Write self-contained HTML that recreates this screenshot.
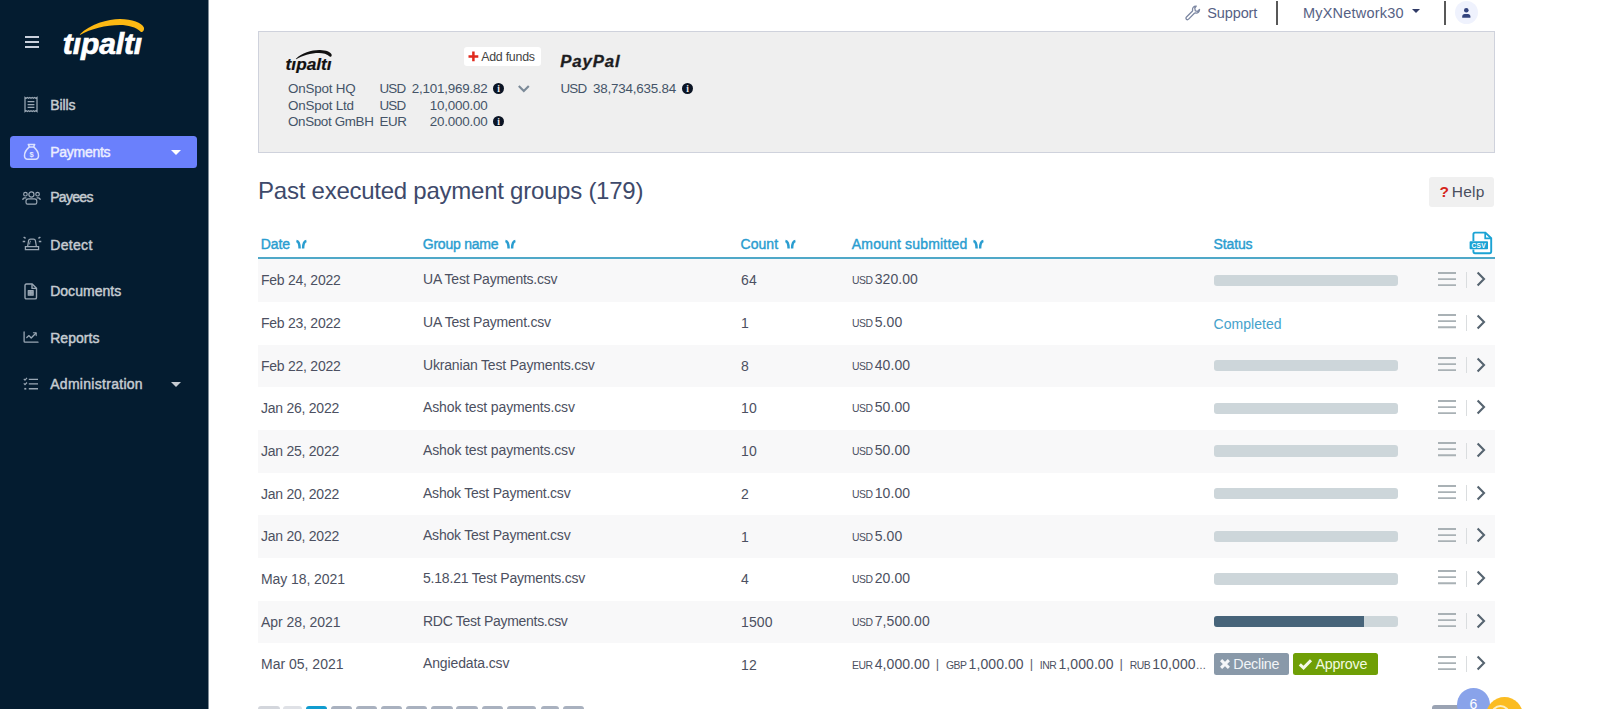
<!DOCTYPE html>
<html lang="en"><head><meta charset="utf-8"><title>Past executed payment groups</title>
<style>
*{box-sizing:border-box;margin:0;padding:0}
html,body{width:1600px;height:709px;overflow:hidden;background:#fff}
body{font-family:"Liberation Sans",sans-serif;color:#4c5061;position:relative}
.abs{position:absolute;white-space:nowrap}
/* sidebar */
.side{position:absolute;left:0;top:0;width:208px;height:709px;background:#041c30;box-shadow:1px 0 0 rgba(4,28,48,.5)}
.side .hamb{position:absolute;left:24.5px;top:36.2px;width:14px;height:12px}
.side .hamb i{position:absolute;left:0;width:14px;height:1.8px;background:#c9d0dc}
.logo{position:absolute;left:62.8px;top:23.8px;white-space:nowrap;font-weight:700;font-style:italic;font-size:30px;line-height:40px;color:#fff;letter-spacing:-0.1px;-webkit-text-stroke:0.7px #fff}
.nav{position:absolute;left:10px;width:187px;height:32px;border-radius:3.5px;color:#c6ccd2;font-size:14px;line-height:32px;white-space:nowrap}
.nav.act{background:#6a80fc;color:#eceeff}
.nav svg.ic{position:absolute}
.nav span{position:absolute;left:40.2px;top:0;-webkit-text-stroke:0.45px currentColor;letter-spacing:-0.3px}
.nav .car{position:absolute;left:161.2px;top:13.8px;width:0;height:0;border-left:5px solid transparent;border-right:5px solid transparent;border-top:5.6px solid currentColor}
.nav.act .car{color:#fff}
/* top */
.topt{position:absolute;top:4.6px;font-size:14.5px;line-height:17px;color:#566184;white-space:nowrap}
.vdiv{position:absolute;top:1px;width:1.7px;height:23.8px;background:#585858}
.ucirc{position:absolute;left:1454.6px;top:1px;width:23px;height:23px;border-radius:50%;background:#eff2fd}
.panel{position:absolute;left:257.5px;top:30.6px;width:1237.5px;height:122.4px;background:#efefef;border:1px solid #cfd2dc}
.pl{position:absolute;font-size:13.4px;line-height:16.5px;color:#445468;white-space:nowrap;letter-spacing:-0.2px}
.clip{position:absolute;overflow:hidden}
.info{position:absolute;width:11px;height:11px;border-radius:50%;background:#0b1424}
.infoi{position:absolute;width:11px;height:11px;text-align:center;font-family:"Liberation Serif",serif;font-weight:700;font-size:9.6px;line-height:11.4px;color:#efefef}
.addf{position:absolute;left:464px;top:47px;width:76.5px;height:19.4px;background:#fff;border-radius:3px;font-size:12.4px;line-height:19.4px;color:#444;white-space:nowrap}
.h1{position:absolute;left:258.1px;top:176.2px;font-size:24px;line-height:30px;color:#3e4a6b;white-space:nowrap;letter-spacing:-0.25px}
.help{position:absolute;left:1429.3px;top:177px;width:65px;height:30px;border-radius:3px;background:#f0f0f0}
.th{position:absolute;top:236px;font-size:14px;line-height:16px;color:#2a9dd0;white-space:nowrap;-webkit-text-stroke:0.4px #2a9dd0}
.hline{position:absolute;left:257.7px;top:257.1px;width:1237px;height:1.9px;background:#4fa8c8}
/* table */
.row{position:absolute;left:258px;width:1236.8px;height:42.67px;font-size:14px;white-space:nowrap}
.row.odd{background:#f8f8f9}
.row>span,.row>svg{position:absolute}
.c-date{left:3px;top:13px;line-height:17px;letter-spacing:-0.25px}
.c-grp{left:165px;top:11.9px;line-height:17px;letter-spacing:-0.25px}
.c-cnt{left:483px;top:13.2px;line-height:17px;letter-spacing:0.1px}
.c-amt{left:594px;top:12.2px;line-height:17px}
.cur{font-size:10.4px;letter-spacing:-0.45px;margin-right:2.1px}
.amt{letter-spacing:0.08px}
.amt u{text-decoration:none;font-size:10.4px;letter-spacing:0}
.sep{margin:0 6.7px 0 6px;position:relative;top:-0.6px;font-size:13px;color:#5d6170}
.c-st{left:955.6px;top:13.8px;line-height:17px;color:#45a2cb;letter-spacing:0.04px}
.bar{left:955.8px;top:15.5px;width:184.4px;height:11.2px;border-radius:3px;background:#cdd6da;overflow:hidden}
.bar i{position:absolute;left:0;top:0;height:100%;width:150.6px;background:#47647a}
.ham{left:1180.2px;top:12.4px}
.vsep{left:1208px;top:12.6px;width:1px;height:16px;background:#dadddf}
.chev{left:1217.5px;top:12px}
.btn{top:9.5px;height:21.8px;border-radius:2.5px;color:#f1f4f7;font-size:14.3px;line-height:21.8px}
.btn b{font-weight:400;position:absolute;top:1.5px;letter-spacing:-0.4px}
.btn svg{position:absolute}
.decline{left:956px;width:74.8px;background:#8999a9}
.decline svg{left:4.6px;top:5.4px}.decline b{left:19.3px;letter-spacing:-0.24px}
.approve{left:1035.1px;width:84.9px;background:#6f9f06;color:#f3fbe0}
.approve svg{left:4.8px;top:5.2px}.approve b{left:22.3px;letter-spacing:-0.19px}
/* bottom */
.pg{position:absolute;top:705.6px;height:10px;border-radius:3px;background:#a9b1bf}

</style></head><body>
<div class="side">
<div class="hamb"><i style="top:0"></i><i style="top:5px"></i><i style="top:10px"></i></div>
<svg class="abs" style="left:76px;top:16px" width="72" height="22" viewBox="0 0 72 22"><path d="M3.7 18.5 C14 8 32 3 44 3 C56 3 66 7 67.9 11.5 C68.5 14 67 16.2 65 16 C60 11 52 9 44 9 C30 9 14 13 4.5 18.8 Z" fill="#fdb913"/></svg>
<div class="logo">tıpaltı</div>
<div class="nav" style="top:89px"><svg class="ic" style="left:13px;top:7.4px" width="16" height="17" viewBox="0 0 16 17" fill="none" stroke="#9aa7b4" stroke-width="1.25"><path d="M2 1.4 L3.2 2.2 L4.4 1.4 L5.6 2.2 L6.8 1.4 L8 2.2 L9.2 1.4 L10.4 2.2 L11.6 1.4 L12.8 2.2 L14 1.4 V15.6 L12.8 14.8 L11.6 15.6 L10.4 14.8 L9.2 15.6 L8 14.8 L6.8 15.6 L5.6 14.8 L4.4 15.6 L3.2 14.8 L2 15.6 Z"/><path d="M4.6 5.6 H11.4 M4.6 8.5 H11.4 M4.6 11.4 H11.4"/></svg><span style="letter-spacing:-0.1px">Bills</span></div>
<div class="nav act" style="top:135.8px"><svg class="ic" style="left:12.6px;top:7.4px" width="17" height="18" viewBox="0 0 17 18" fill="none" stroke="#dbe1ff" stroke-width="1.5" stroke-linejoin="round"><path d="M5.3 1.4 H11.7 L10.6 3.9 H6.4 Z"/><path d="M6.4 3.9 C3.6 6.2 1.5 9.8 1.5 12.8 C1.5 15 2.7 16.2 4.6 16.2 H12.4 C14.3 16.2 15.5 15 15.5 12.8 C15.5 9.8 13.4 6.2 10.6 3.9"/><text x="8.5" y="13.6" font-family="Liberation Sans, sans-serif" font-size="7.6" font-weight="700" fill="#e6eaff" stroke="none" text-anchor="middle">$</text></svg><span style="top:0.5px;letter-spacing:-0.26px">Payments</span><i class="car"></i></div>
<div class="nav" style="top:181.3px"><svg class="ic" style="left:11.8px;top:9.9px" width="19" height="14.2" viewBox="0 0 20 15" fill="none" stroke="#9aa7b4" stroke-width="1.25"><circle cx="9.9" cy="3.7" r="2.7"/><circle cx="3.6" cy="3.4" r="1.9"/><circle cx="16.4" cy="3.4" r="1.9"/><path d="M6.6 8.3 H13.2 C14.8 8.3 15.6 9.4 15.6 10.7 V12.2 C15.6 13.2 15 13.9 14 13.9 H5.8 C4.8 13.9 4.2 13.2 4.2 12.2 V10.7 C4.2 9.4 5 8.3 6.6 8.3 Z"/><path d="M0.8 9.6 C0.8 8 1.7 7.2 3 7.2 H4.6 M15.4 7.2 H17 C18.3 7.2 19.2 8 19.2 9.6"/></svg><span style="letter-spacing:-0.7px">Payees</span></div>
<div class="nav" style="top:228.6px"><svg class="ic" style="left:11.5px;top:7.6px" width="20" height="15" viewBox="0 0 20 15" fill="none" stroke="#9aa7b4" stroke-width="1.25"><path d="M5.6 10.6 L6.6 4.6 C6.8 3.5 7.5 3 8.5 3 H11.5 C12.5 3 13.2 3.5 13.4 4.6 L14.4 10.6"/><path d="M3.4 10.7 H16.6 V13.6 H3.4 Z"/><path d="M9 5 C8.2 5 8 5.6 7.9 6.4 L7.6 8.4" stroke-width="0.9"/><path d="M0.7 5.6 H3.2 M16.8 5.6 H19.3 M1.6 1 L3.6 2.4 M18.4 1 L16.4 2.4" stroke-width="1.5"/></svg><span style="letter-spacing:0.33px">Detect</span></div>
<div class="nav" style="top:274.8px"><svg class="ic" style="left:14.4px;top:7.8px" width="14" height="17" viewBox="0 0 14 17" fill="none" stroke="#9aa7b4" stroke-width="1.4" stroke-linejoin="round"><path d="M2.4 1 H8.2 L12.5 5.2 V14.4 C12.5 15.3 12 15.9 11.1 15.9 H2.4 C1.5 15.9 1 15.3 1 14.4 V2.5 C1 1.6 1.5 1 2.4 1 Z"/><path d="M8 1.2 V5.4 H12.3"/><path d="M4.2 7.6 H9.2 V12.2 H4.2 Z M4.2 9.9 H9.2 M6.7 7.6 V12.2" stroke-width="1.1" fill="#7f8e9c"/></svg><span style="letter-spacing:0.02px">Documents</span></div>
<div class="nav" style="top:321.8px"><svg class="ic" style="left:13px;top:9.6px" width="16" height="13" viewBox="0 0 16 13" fill="none" stroke="#9aa7b4" stroke-width="1.3" stroke-linecap="round" stroke-linejoin="round"><path d="M1.1 0.9 V10.3 C1.1 10.9 1.4 11.2 2 11.2 H15"/><path d="M3.8 6.6 L6 4.6 L8.2 7 L12.8 2.2"/><path d="M10.4 1.8 H13.2 V4.6" stroke-width="1.1"/></svg><span style="letter-spacing:0.04px">Reports</span></div>
<div class="nav" style="top:368.3px"><svg class="ic" style="left:13.2px;top:9px" width="16" height="14" viewBox="0 0 16 14" fill="none" stroke="#9aa7b4" stroke-width="1.35"><path d="M5.8 2.3 H15 M5.8 6.9 H15 M5.8 11.7 H15"/><path d="M0.8 1.8 L2 3.1 L4 0.9 M0.8 6.4 L2 7.7 L4 5.5" stroke-width="1.2"/><path d="M1.3 10.9 H3.3 V12.6 H1.3 Z" fill="#9aa7b4" stroke="none"/></svg><span style="letter-spacing:0.29px">Administration</span><i class="car"></i></div>
</div>
<svg class="abs" style="left:1185px;top:5px" width="17" height="16" viewBox="0 0 17 16" fill="none" stroke="#7c87a2" stroke-width="1.3" stroke-linejoin="round" stroke-linecap="round"><path d="M11.2 1.1 C9 0.9 7.2 2.8 7.6 5 C7.7 5.5 7.6 5.9 7.3 6.2 L1.5 12 C0.8 12.7 0.8 13.6 1.4 14.2 C2 14.8 2.9 14.8 3.6 14.1 L9.4 8.3 C9.7 8 10.1 7.9 10.6 8 C12.8 8.4 14.7 6.6 14.5 4.4 L12.4 6.4 L10.3 5.9 L9.8 3.2 Z"/></svg>
<div class="topt" style="left:1207.2px;letter-spacing:-0.1px">Support</div>
<div class="vdiv" style="left:1276px"></div>
<div class="topt" style="left:1303px;letter-spacing:0.2px">MyXNetwork30</div>
<div class="abs" style="left:1412px;top:9.3px;width:0;height:0;border-left:4.1px solid transparent;border-right:4.1px solid transparent;border-top:4.5px solid #303b67"></div>
<div class="vdiv" style="left:1444.2px"></div>
<div class="ucirc"></div>
<svg class="abs" style="left:1461px;top:7px" width="11" height="12" viewBox="0 0 11 12"><circle cx="5.3" cy="3.3" r="2.3" fill="#33437d"/><path d="M1.2 10.8 V9.4 C1.2 7.9 2.2 7 3.6 7 H7 C8.4 7 9.4 7.9 9.4 9.4 V10.8 Z" fill="#33437d"/></svg>
<div class="panel"></div>
<svg class="abs" style="left:294px;top:48px" width="40" height="13" viewBox="0 0 40 13"><path d="M1.7 11 C8 4.6 18 1.8 26 2 C32 2.2 36.6 4 37.6 6.4 C38 7.8 37.2 8.9 36 8.8 C33 5.8 29 4.9 25 4.9 C17 4.9 8 7.6 2.2 11.2 Z" fill="#111"/></svg>
<div class="abs" style="left:285.6px;top:52px;font-size:17.3px;line-height:24px;font-weight:700;font-style:italic;color:#111;-webkit-text-stroke:0.2px #111;letter-spacing:0px">tıpaltı</div>
<div class="pl" style="left:288px;top:81.3px">OnSpot HQ</div>
<div class="pl" style="left:288px;top:97.8px">OnSpot Ltd</div>
<div class="clip" style="left:280px;top:114.3px;width:232px;height:12.2px"><div class="pl" style="left:8px;top:0;letter-spacing:-0.35px">OnSpot GmBH</div><div class="pl" style="left:99.6px;top:0;letter-spacing:-0.45px">EUR</div><div class="pl" style="right:24.4px;top:0">20,000.00</div><i class="info" style="left:213.2px;top:1.3px"></i><span class="infoi" style="left:213.2px;top:1.3px">i</span></div>
<div class="pl" style="left:379.6px;top:81.3px;letter-spacing:-0.9px">USD</div>
<div class="pl" style="left:379.6px;top:97.8px;letter-spacing:-0.9px">USD</div>
<div class="pl" style="right:1112.4px;top:81.3px">2,101,969.82</div>
<div class="pl" style="right:1112.4px;top:97.8px">10,000.00</div>
<i class="info" style="left:493.2px;top:83.1px"></i><span class="infoi" style="left:493.2px;top:83.1px">i</span>
<svg class="abs" style="left:516.5px;top:83.5px" width="14" height="10" viewBox="0 0 14 10"><path d="M1.8 1.9 L6.8 7 L11.8 1.9" fill="none" stroke="#7b8a98" stroke-width="2.1"/></svg>
<div class="addf"><svg class="abs" style="left:4.4px;top:4px" width="11" height="11" viewBox="0 0 11 11"><path d="M5.4 0.5 V10.3 M0.5 5.4 H10.3" stroke="#e0291d" stroke-width="2.5" fill="none"/></svg><span style="position:absolute;left:17.2px;top:0.9px;letter-spacing:-0.25px">Add funds</span></div>
<div class="abs" style="left:560.2px;top:50.6px;font-size:16.8px;line-height:22px;font-weight:700;font-style:italic;color:#1d1d1f;letter-spacing:0.9px;-webkit-text-stroke:0.3px #1d1d1f">PayPal</div>
<div class="pl" style="left:560.6px;top:81.3px;letter-spacing:-0.9px">USD</div>
<div class="pl" style="right:924px;top:81.3px">38,734,635.84</div>
<i class="info" style="left:682px;top:83.1px"></i><span class="infoi" style="left:682px;top:83.1px">i</span>
<div class="h1">Past executed payment groups (179)</div>
<div class="help"><span class="abs" style="left:10.2px;top:6.3px;font-size:15.5px;line-height:18px;font-weight:700;color:#d5261a">?</span><span class="abs" style="left:22.4px;top:6.4px;font-size:15.5px;line-height:18px;color:#4a4f5e;letter-spacing:0.3px">Help</span></div>
<div class="th" style="left:260.8px;letter-spacing:-0.07px">Date</div>
<svg class="abs" style="left:296.2px;top:239.2px" width="11" height="10" viewBox="0 0 11 10" fill="none" stroke="#2a9dd0" stroke-width="2.5"><path d="M0.4 2.1 C2.9 2.6 3.6 5 3.6 9.5 M10.4 2.1 C7.7 2.6 7.1 5 7.1 9.5"/></svg>
<div class="th" style="left:422.8px;letter-spacing:-0.24px">Group name</div>
<svg class="abs" style="left:504.6px;top:239.2px" width="11" height="10" viewBox="0 0 11 10" fill="none" stroke="#2a9dd0" stroke-width="2.5"><path d="M0.4 2.1 C2.9 2.6 3.6 5 3.6 9.5 M10.4 2.1 C7.7 2.6 7.1 5 7.1 9.5"/></svg>
<div class="th" style="left:740.6px;letter-spacing:0.02px">Count</div>
<svg class="abs" style="left:784.6px;top:239.2px" width="11" height="10" viewBox="0 0 11 10" fill="none" stroke="#2a9dd0" stroke-width="2.5"><path d="M0.4 2.1 C2.9 2.6 3.6 5 3.6 9.5 M10.4 2.1 C7.7 2.6 7.1 5 7.1 9.5"/></svg>
<div class="th" style="left:851.8px;letter-spacing:0.17px">Amount submitted</div>
<svg class="abs" style="left:972.8px;top:239.2px" width="11" height="10" viewBox="0 0 11 10" fill="none" stroke="#2a9dd0" stroke-width="2.5"><path d="M0.4 2.1 C2.9 2.6 3.6 5 3.6 9.5 M10.4 2.1 C7.7 2.6 7.1 5 7.1 9.5"/></svg>
<div class="th" style="left:1213.6px;letter-spacing:-0.15px">Status</div>
<svg class="abs" style="left:1469px;top:231px" width="24" height="24" viewBox="0 0 24 24"><path d="M4.4 10 V3.2 C4.4 2.2 5 1.6 6 1.6 H16.4 L22.2 7.2 V20.6 C22.2 21.6 21.6 22.2 20.6 22.2 H6 C5 22.2 4.4 21.6 4.4 20.6 V18.4" fill="none" stroke="#1ba3d4" stroke-width="1.9"/><path d="M16.2 1.8 V7.4 H22" fill="none" stroke="#1ba3d4" stroke-width="1.7"/><rect x="0.6" y="10.2" width="18.4" height="8" rx="0.8" fill="#1ba3d4"/><text x="9.8" y="16.6" font-family="Liberation Sans, sans-serif" font-weight="700" font-size="6.6" fill="#fff" text-anchor="middle" letter-spacing="0.3">CSV</text></svg>
<div class="hline"></div>
<div class="tbl">
<div class="row odd" style="top:259.30px"><span class="c-date">Feb 24, 2022</span><span class="c-grp" style="letter-spacing:-0.235px">UA Test Payments.csv</span><span class="c-cnt">64</span><span class="c-amt"><span class="cur">USD</span><span class="amt">320.00</span></span><span class="bar"></span><svg class="ham" viewBox="0 0 18.2 14.4" width="18.2" height="14.4"><path d="M0 1.05 H18.2 M0 7.1 H18.2 M0 13.2 H18.2" stroke="#a9b1b5" stroke-width="1.9" fill="none"/></svg><span class="vsep"></span><svg class="chev" viewBox="0 0 10 16" width="10" height="16"><path d="M1.6 1.6 L8 8 L1.6 14.4" stroke="#566470" stroke-width="2.1" fill="none"/></svg></div>
<div class="row" style="top:301.97px"><span class="c-date">Feb 23, 2022</span><span class="c-grp" style="letter-spacing:-0.22px">UA Test Payment.csv</span><span class="c-cnt">1</span><span class="c-amt"><span class="cur">USD</span><span class="amt">5.00</span></span><span class="c-st">Completed</span><svg class="ham" viewBox="0 0 18.2 14.4" width="18.2" height="14.4"><path d="M0 1.05 H18.2 M0 7.1 H18.2 M0 13.2 H18.2" stroke="#a9b1b5" stroke-width="1.9" fill="none"/></svg><span class="vsep"></span><svg class="chev" viewBox="0 0 10 16" width="10" height="16"><path d="M1.6 1.6 L8 8 L1.6 14.4" stroke="#566470" stroke-width="2.1" fill="none"/></svg></div>
<div class="row odd" style="top:344.64px"><span class="c-date">Feb 22, 2022</span><span class="c-grp" style="letter-spacing:-0.18px">Ukranian Test Payments.csv</span><span class="c-cnt">8</span><span class="c-amt"><span class="cur">USD</span><span class="amt">40.00</span></span><span class="bar"></span><svg class="ham" viewBox="0 0 18.2 14.4" width="18.2" height="14.4"><path d="M0 1.05 H18.2 M0 7.1 H18.2 M0 13.2 H18.2" stroke="#a9b1b5" stroke-width="1.9" fill="none"/></svg><span class="vsep"></span><svg class="chev" viewBox="0 0 10 16" width="10" height="16"><path d="M1.6 1.6 L8 8 L1.6 14.4" stroke="#566470" stroke-width="2.1" fill="none"/></svg></div>
<div class="row" style="top:387.31px"><span class="c-date">Jan 26, 2022</span><span class="c-grp" style="letter-spacing:-0.13px">Ashok test payments.csv</span><span class="c-cnt">10</span><span class="c-amt"><span class="cur">USD</span><span class="amt">50.00</span></span><span class="bar"></span><svg class="ham" viewBox="0 0 18.2 14.4" width="18.2" height="14.4"><path d="M0 1.05 H18.2 M0 7.1 H18.2 M0 13.2 H18.2" stroke="#a9b1b5" stroke-width="1.9" fill="none"/></svg><span class="vsep"></span><svg class="chev" viewBox="0 0 10 16" width="10" height="16"><path d="M1.6 1.6 L8 8 L1.6 14.4" stroke="#566470" stroke-width="2.1" fill="none"/></svg></div>
<div class="row odd" style="top:429.98px"><span class="c-date">Jan 25, 2022</span><span class="c-grp" style="letter-spacing:-0.13px">Ashok test payments.csv</span><span class="c-cnt">10</span><span class="c-amt"><span class="cur">USD</span><span class="amt">50.00</span></span><span class="bar"></span><svg class="ham" viewBox="0 0 18.2 14.4" width="18.2" height="14.4"><path d="M0 1.05 H18.2 M0 7.1 H18.2 M0 13.2 H18.2" stroke="#a9b1b5" stroke-width="1.9" fill="none"/></svg><span class="vsep"></span><svg class="chev" viewBox="0 0 10 16" width="10" height="16"><path d="M1.6 1.6 L8 8 L1.6 14.4" stroke="#566470" stroke-width="2.1" fill="none"/></svg></div>
<div class="row" style="top:472.65px"><span class="c-date">Jan 20, 2022</span><span class="c-grp" style="letter-spacing:-0.22px">Ashok Test Payment.csv</span><span class="c-cnt">2</span><span class="c-amt"><span class="cur">USD</span><span class="amt">10.00</span></span><span class="bar"></span><svg class="ham" viewBox="0 0 18.2 14.4" width="18.2" height="14.4"><path d="M0 1.05 H18.2 M0 7.1 H18.2 M0 13.2 H18.2" stroke="#a9b1b5" stroke-width="1.9" fill="none"/></svg><span class="vsep"></span><svg class="chev" viewBox="0 0 10 16" width="10" height="16"><path d="M1.6 1.6 L8 8 L1.6 14.4" stroke="#566470" stroke-width="2.1" fill="none"/></svg></div>
<div class="row odd" style="top:515.32px"><span class="c-date">Jan 20, 2022</span><span class="c-grp" style="letter-spacing:-0.22px">Ashok Test Payment.csv</span><span class="c-cnt">1</span><span class="c-amt"><span class="cur">USD</span><span class="amt">5.00</span></span><span class="bar"></span><svg class="ham" viewBox="0 0 18.2 14.4" width="18.2" height="14.4"><path d="M0 1.05 H18.2 M0 7.1 H18.2 M0 13.2 H18.2" stroke="#a9b1b5" stroke-width="1.9" fill="none"/></svg><span class="vsep"></span><svg class="chev" viewBox="0 0 10 16" width="10" height="16"><path d="M1.6 1.6 L8 8 L1.6 14.4" stroke="#566470" stroke-width="2.1" fill="none"/></svg></div>
<div class="row" style="top:557.99px"><span class="c-date" style="letter-spacing:-0.08px">May 18, 2021</span><span class="c-grp" style="letter-spacing:-0.2px">5.18.21 Test Payments.csv</span><span class="c-cnt">4</span><span class="c-amt"><span class="cur">USD</span><span class="amt">20.00</span></span><span class="bar"></span><svg class="ham" viewBox="0 0 18.2 14.4" width="18.2" height="14.4"><path d="M0 1.05 H18.2 M0 7.1 H18.2 M0 13.2 H18.2" stroke="#a9b1b5" stroke-width="1.9" fill="none"/></svg><span class="vsep"></span><svg class="chev" viewBox="0 0 10 16" width="10" height="16"><path d="M1.6 1.6 L8 8 L1.6 14.4" stroke="#566470" stroke-width="2.1" fill="none"/></svg></div>
<div class="row odd" style="top:600.66px"><span class="c-date" style="letter-spacing:-0.06px">Apr 28, 2021</span><span class="c-grp" style="letter-spacing:-0.29px">RDC Test Payments.csv</span><span class="c-cnt">1500</span><span class="c-amt"><span class="cur">USD</span><span class="amt">7,500.00</span></span><span class="bar"><i></i></span><svg class="ham" viewBox="0 0 18.2 14.4" width="18.2" height="14.4"><path d="M0 1.05 H18.2 M0 7.1 H18.2 M0 13.2 H18.2" stroke="#a9b1b5" stroke-width="1.9" fill="none"/></svg><span class="vsep"></span><svg class="chev" viewBox="0 0 10 16" width="10" height="16"><path d="M1.6 1.6 L8 8 L1.6 14.4" stroke="#566470" stroke-width="2.1" fill="none"/></svg></div>
<div class="row" style="top:643.33px"><span class="c-date" style="letter-spacing:0px">Mar 05, 2021</span><span class="c-grp" style="letter-spacing:-0.13px">Angiedata.csv</span><span class="c-cnt">12</span><span class="c-amt"><span class="cur">EUR</span><span class="amt">4,000.00</span><span class="sep">|</span><span class="cur">GBP</span><span class="amt">1,000.00</span><span class="sep">|</span><span class="cur">INR</span><span class="amt">1,000.00</span><span class="sep">|</span><span class="cur">RUB</span><span class="amt">10,000<u>…</u></span></span><span class="btn decline"><svg viewBox="0 0 12 12" width="12" height="12"><path d="M2.1 2.1 L9.9 9.9 M9.9 2.1 L2.1 9.9" stroke="#f4f6f8" stroke-width="3" fill="none"/></svg><b>Decline</b></span><span class="btn approve"><svg viewBox="0 0 15 12" width="15" height="12"><path d="M1.8 6.3 L5.6 9.9 L13 2.2" stroke="#f4f9e8" stroke-width="3" fill="none"/></svg><b>Approve</b></span><svg class="ham" viewBox="0 0 18.2 14.4" width="18.2" height="14.4"><path d="M0 1.05 H18.2 M0 7.1 H18.2 M0 13.2 H18.2" stroke="#a9b1b5" stroke-width="1.9" fill="none"/></svg><span class="vsep"></span><svg class="chev" viewBox="0 0 10 16" width="10" height="16"><path d="M1.6 1.6 L8 8 L1.6 14.4" stroke="#566470" stroke-width="2.1" fill="none"/></svg></div>
</div>
<div class="pg" style="left:257.8px;width:22px;background:#d3d6dc"></div>
<div class="pg" style="left:283.1px;width:18.8px;background:#dfe1e6"></div>
<div class="pg" style="left:305.6px;width:21.3px;background:#119ccf"></div>
<div class="pg" style="left:330.6px;width:21.6px"></div>
<div class="pg" style="left:355.6px;width:21.8px"></div>
<div class="pg" style="left:380.9px;width:21.6px"></div>
<div class="pg" style="left:405.9px;width:21.6px"></div>
<div class="pg" style="left:431.2px;width:21.6px"></div>
<div class="pg" style="left:456.2px;width:21.8px"></div>
<div class="pg" style="left:481.5px;width:21.6px"></div>
<div class="pg" style="left:507.4px;width:28.6px"></div>
<div class="pg" style="left:541.3px;width:17.4px"></div>
<div class="pg" style="left:562.9px;width:21.4px"></div>
<div class="pg" style="left:1431.6px;width:30px;top:705.4px;background:#9aa3b3"></div>
<div class="abs" style="left:1457px;top:688.2px;width:33px;height:33px;border-radius:50%;background:#89a3ea;color:#fff;font-size:14px;line-height:33px;text-align:center">6</div>
<div class="abs" style="left:1485.6px;top:696.6px;width:37px;height:37px;border-radius:50%;background:#fbbc22"></div>
<div class="abs" style="left:1490.8px;top:704.8px;width:19px;height:19px;border-radius:50%;border:2.2px solid #fdeec0"></div>
</body></html>
